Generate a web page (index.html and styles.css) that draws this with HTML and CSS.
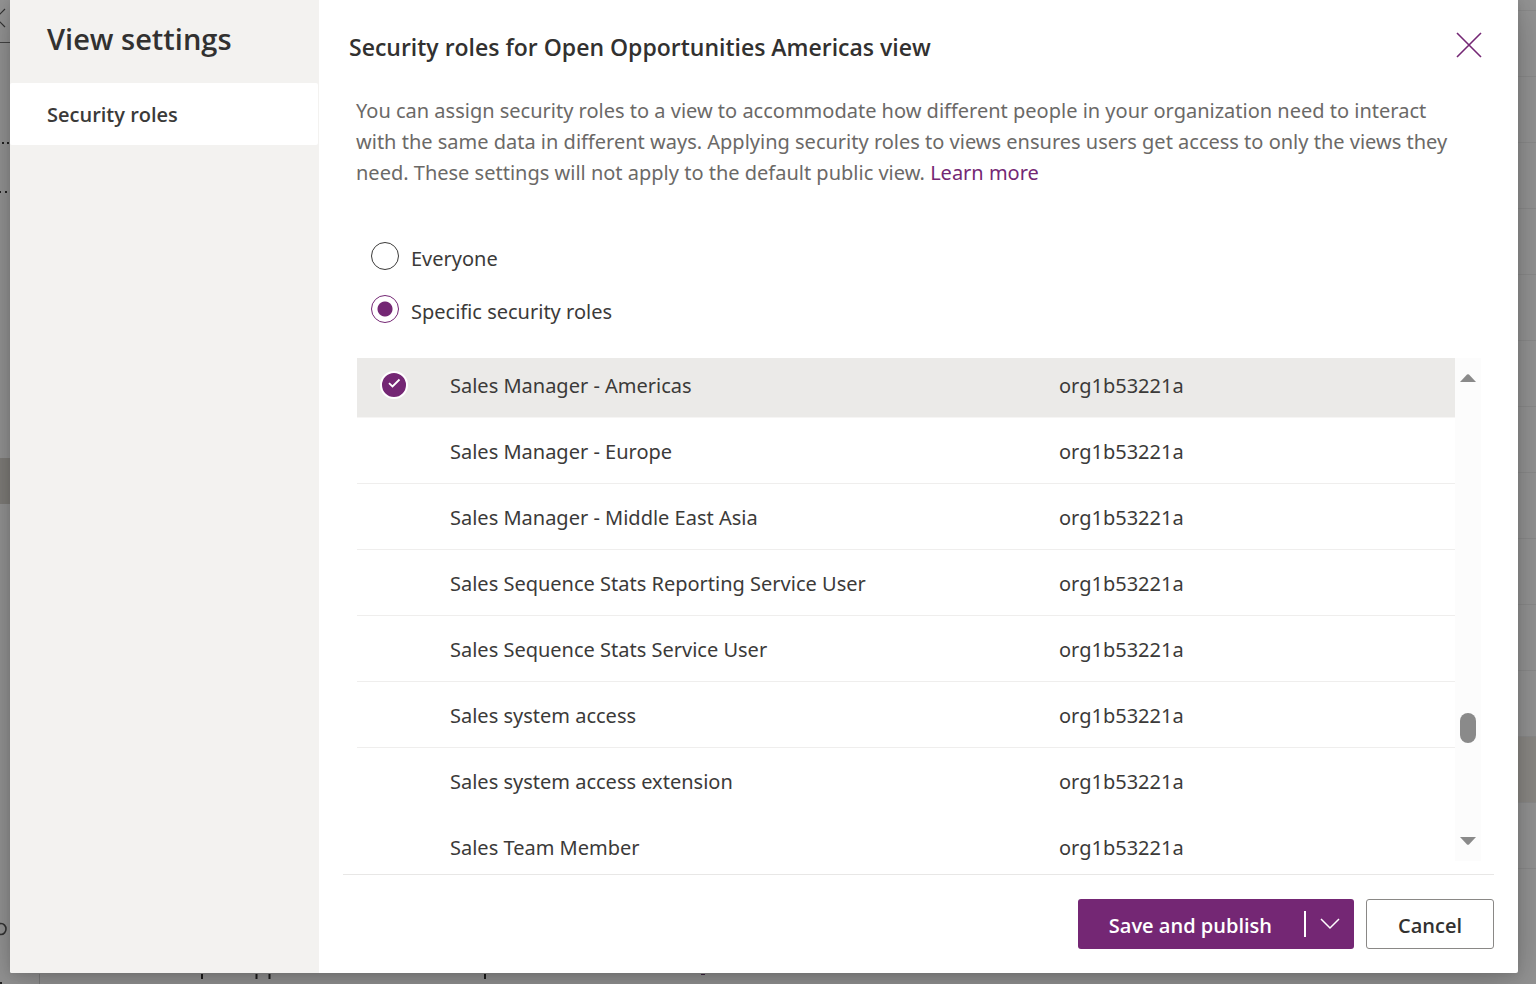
FILE: index.html
```html
<!DOCTYPE html>
<html lang="en">
<head>
<meta charset="utf-8">
<title>View settings</title>
<link rel="stylesheet" href="styles.css">
</head>
<body>
<div class="page">
  <div class="backdrop" aria-hidden="true">
    <svg class="backdrop-nav" width="10" height="984" viewBox="0 0 10 984">
      <path d="M5 9L-4 18L5 27" fill="none" stroke="#333" stroke-width="1.2"/>
      <path d="M0 42.5H10" stroke="#444"/>
      <path d="M2 143h2M7 143h2M0 192h1M5 192h2" stroke="#222" stroke-width="2"/>
      <path d="M0 454h10v46H0z" fill="#7f7d79" transform="translate(0 4)"/>
      <ellipse cx="1" cy="929" rx="5" ry="5.5" fill="none" stroke="#333" stroke-width="1.6"/>
      <path d="M0 983h2" stroke="#222" stroke-width="2"/>
    </svg>
    <svg class="backdrop-foot" width="760" height="10" viewBox="0 0 760 10">
      <path d="M39.5 0V10" stroke="#7d7d7d"/>
      <path d="M202 0v5M256.500 0v5M269.500 0v5M485 0v5" stroke="#1c1c1c" stroke-width="2"/>
      <path d="M701 0h4" stroke="#3c2540" stroke-width="2"/>
    </svg>
    <div class="backdrop-rows">
      <i></i><i></i><i></i><i></i><i></i><i></i><i></i><i></i><i></i><i></i><i></i><i class="picked"></i><i></i><i></i>
    </div>
  </div>

  <div class="dialog" role="dialog" aria-labelledby="dialog-title">
    <nav class="side">
      <h1 class="side-title">View settings</h1>
      <a class="side-link" href="#roles" aria-current="page">Security roles</a>
    </nav>
    <main class="panel" id="roles">
      <header class="panel-head">
        <h2 class="panel-title" id="dialog-title">Security roles for Open Opportunities Americas view</h2>
        <button class="close" type="button" aria-label="Close">
          <svg width="26" height="26" viewBox="0 0 26 26"><path d="M1 1L25 25M25 1L1 25" fill="none" stroke="#742774" stroke-width="1.6"/></svg>
        </button>
      </header>
      <p class="intro">You can assign security roles to a view to accommodate how different people in your organization need to interact with the same data in different ways. Applying security roles to views ensures users get access to only the views they need. These settings will not apply to the default public view. <a class="more" href="#learn">Learn more</a></p>

      <div class="choices" role="radiogroup" aria-label="Who can see this view">
        <label class="choice"><input type="radio" name="who"><span>Everyone</span></label>
        <label class="choice"><input type="radio" name="who" checked><span>Specific security roles</span></label>
      </div>

      <div class="list">
        <table class="roles" aria-label="Security roles">
          <tbody>
            <tr class="selected"><td class="pick"><input class="tick" type="checkbox" checked aria-label="Select Sales Manager - Americas"><svg class="tick-mark" width="28" height="28" viewBox="0 0 28 28" aria-hidden="true"><circle cx="14" cy="14" r="13" fill="#742774" stroke="#fff" stroke-width="2"/><path d="M9 12.200L12.500 15.500L19.500 8.500" fill="none" stroke="#fff" stroke-width="1.800"/></svg></td><td>Sales Manager - Americas</td><td class="org">org1b53221a</td></tr>
            <tr><td class="pick"></td><td>Sales Manager - Europe</td><td class="org">org1b53221a</td></tr>
            <tr><td class="pick"></td><td>Sales Manager - Middle East Asia</td><td class="org">org1b53221a</td></tr>
            <tr><td class="pick"></td><td>Sales Sequence Stats Reporting Service User</td><td class="org">org1b53221a</td></tr>
            <tr><td class="pick"></td><td>Sales Sequence Stats Service User</td><td class="org">org1b53221a</td></tr>
            <tr><td class="pick"></td><td>Sales system access</td><td class="org">org1b53221a</td></tr>
            <tr class="plain"><td class="pick"></td><td>Sales system access extension</td><td class="org">org1b53221a</td></tr>
            <tr class="plain"><td class="pick"></td><td>Sales Team Member</td><td class="org">org1b53221a</td></tr>
          </tbody>
        </table>
        <div class="scrollbar" aria-hidden="true">
          <svg width="16" height="8" viewBox="0 0 16 8"><path d="M0 8L7 .6Q8 0 9 .6L16 8z" fill="#8a8a8a"/></svg>
          <div class="track"><div class="thumb"></div></div>
          <svg width="16" height="8" viewBox="0 0 16 8"><path d="M0 0L7 7.400Q8 8 9 7.400L16 0z" fill="#8a8a8a"/></svg>
        </div>
      </div>

      <footer class="actions">
        <div class="split">
          <button class="save" type="button">Save and publish</button>
          <button class="save-menu" type="button" aria-label="More save options">
            <svg width="20" height="12" viewBox="0 0 20 12"><path d="M1 1L10 10L19 1" fill="none" stroke="#fff" stroke-width="1.500"/></svg>
          </button>
        </div>
        <button class="cancel" type="button">Cancel</button>
      </footer>
    </main>
  </div>
</div>
</body>
</html>
```
FILE: styles.css
```css
* { box-sizing: border-box; }
body {
  margin: 0;
  font-family: "Segoe UI", "Noto Sans", "Open Sans", sans-serif;
  font-size: 20px;
  line-height: 31px;
  color: #3b3a39;
}
button, input { font: inherit; }
.side-title, .side-link, .panel-title, .save, .cancel {
  font-family: "Segoe UI", "Open Sans", "Noto Sans", sans-serif;
  font-weight: 600;
}
.page {
  position: relative;
  display: flex;
  min-height: 100vh;
  padding: 0 18px 11px 10px;
  overflow: hidden;
  background: #949494;
}
.backdrop { position: absolute; inset: 0; }
.backdrop-nav { position: absolute; left: 0; top: 0; }
.backdrop-foot { position: absolute; left: 0; bottom: 0; }
.backdrop-rows {
  position: absolute;
  inset: 0 0 0 auto;
  width: 40px;
  padding-top: 10px;
}
.backdrop-rows i {
  display: block;
  height: 66px;
  border-top: 1px solid #8b8b8b;
}
.backdrop-rows .picked { background: #8b8985; }
.dialog {
  position: relative;
  display: flex;
  flex: 1;
  background: #fff;
  border-radius: 0 0 2px 2px;
  box-shadow: 0 8px 40px rgba(0, 0, 0, .25), 0 1px 8px rgba(0, 0, 0, .1);
}
.side {
  flex: 0 0 309px;
  background: #f3f2f0;
  border-radius: 0 0 0 2px;
}
.side-title {
  margin: 0;
  padding: 18px 37px 23px;
  font-size: 29px;
  line-height: 42px;
  color: #323130;
}
.side-link {
  display: block;
  margin-right: 1px;
  padding: 16px 37px 15px;
  border-radius: 2px;
  background: #fff;
  color: #3b3a39;
  text-decoration: none;
}
.panel {
  display: flex;
  flex-direction: column;
  flex: 1;
  min-width: 0;
  padding: 0 24px 24px;
}
.panel-head {
  display: flex;
  align-items: flex-start;
  justify-content: space-between;
  padding: 30px 11px 0 6px;
}
.panel-title {
  margin: 0;
  font-size: 23px;
  line-height: 34px;
  color: #323130;
}
.close {
  display: flex;
  padding: 2px 1px;
  border: 0;
  background: none;
}
.intro {
  margin: 0;
  padding: 31px 30px 0 13px;
  color: #6b6967;
}
.more { color: #742774; text-decoration: none; }
.choices {
  display: flex;
  flex-direction: column;
  gap: 21px;
  padding: 54px 28px 31px;
}
.choice {
  display: flex;
  gap: 12px;
  align-items: flex-start;
}
.choice input {
  appearance: none;
  width: 28px;
  height: 28px;
  margin: 0;
  border: 1px solid #3b3a39;
  border-radius: 50%;
  background: #fff;
}
.choice input:checked {
  border-color: #742774;
  background: radial-gradient(circle, #742774 0 7px, #fff 8px);
}
.choice span { padding-top: 1px; }
.list {
  display: flex;
  flex: 1 0 0;
  min-height: 503px;
  margin: 0 13px 0 14px;
  overflow: hidden;
}
.roles {
  flex: 1;
  align-self: flex-start;
  border-collapse: separate;
  border-spacing: 0;
  table-layout: fixed;
}
.roles td {
  height: 66px;
  padding: 2px 0 0;
  border-bottom: 1px solid #efeeed;
}
.roles .selected td { height: 60px; padding: 0 0 5px; background: #ebeae8; border-color: #f6f5f4; }
.roles .plain td { border-color: transparent; }
.roles .pick { width: 93px; }
.roles .org { width: 396px; }
.roles .selected .pick { position: relative; padding: 0 0 5px 23px; }
.tick {
  appearance: none;
  display: block;
  width: 28px;
  height: 28px;
  margin: 0;
}
.tick-mark {
  position: absolute;
  left: 23px;
  top: 13px;
  pointer-events: none;
}
.scrollbar {
  display: flex;
  flex-direction: column;
  align-items: center;
  width: 26px;
  padding: 16px 0;
  background: #fcfcfc;
}
.track { flex: 1; padding-top: 331px; }
.thumb {
  width: 16px;
  height: 30px;
  border-radius: 8px;
  background: #8a8a8a;
}
.actions {
  display: flex;
  justify-content: flex-end;
  gap: 12px;
  margin-top: 13px;
  padding-top: 24px;
  border-top: 1px solid #e8e7e6;
}
.split {
  display: flex;
  align-items: center;
  height: 50px;
  border-radius: 3px;
  background: #742774;
}
.save, .save-menu {
  border: 0;
  background: none;
  color: #fff;
}
.save { padding: 3px 32px 0 31px; }
.save-menu {
  display: flex;
  align-items: center;
  height: 26px;
  padding: 0 14px;
  border-left: 2px solid #fff;
}
.cancel {
  height: 50px;
  padding: 3px 31px 0;
  border: 1px solid #8a8886;
  border-radius: 3px;
  background: #fff;
  color: #323130;
}
```
